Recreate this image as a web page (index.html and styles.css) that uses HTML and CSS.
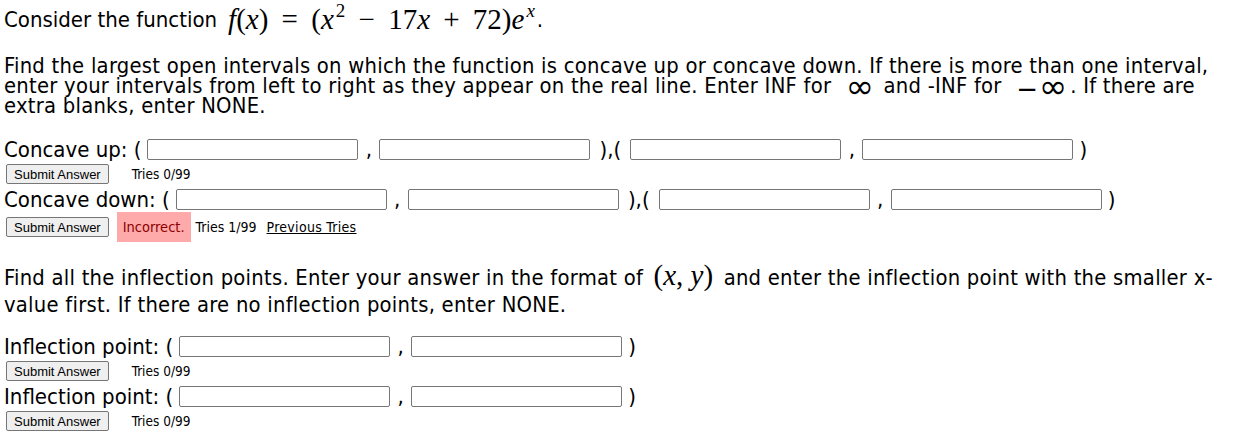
FILE: index.html
```html
<!DOCTYPE html>
<html lang="en">
<head>
    <meta charset="UTF-8">
    <title>Concavity problem</title>
    <link rel="stylesheet" href="styles.css">
</head>
<body>
    <div class="problem">
        <!-- statement -->
        <p class="intro">Consider the function <span class="math"><i>f</i>(<i>x</i>) <span class="op">=</span> (<i>x</i><sup>2</sup> <span class="op">&minus;</span> 17<i>x</i> <span class="op">+</span> 72)<i>e</i><sup><i>x</i></sup></span>.</p>

        <p class="text">Find the largest open intervals on which the function is concave up or concave down. If there is more than one interval,<br>enter your intervals from left to right as they appear on the real line. Enter INF for <span class="inf">&infin;</span> and -INF for <span class="inf"><span class="minus">&minus;</span>&infin;</span>. If there are<br>extra blanks, enter NONE.</p>

        <!-- concave up -->
        <div class="row">
            <span class="label">Concave up: (</span>
            <input type="text" class="answer">
            <span class="sep">,</span>
            <input type="text" class="answer">
            <span class="sep wide">),(</span>
            <input type="text" class="answer">
            <span class="sep">,</span>
            <input type="text" class="answer">
            <span class="sep end">)</span>
        </div>
        <div class="submit-row">
            <button>Submit Answer</button>
            <span class="tries">Tries 0/99</span>
        </div>

        <!-- concave down -->
        <div class="row">
            <span class="label">Concave down: (</span>
            <input type="text" class="answer">
            <span class="sep">,</span>
            <input type="text" class="answer">
            <span class="sep wide">),(</span>
            <input type="text" class="answer">
            <span class="sep">,</span>
            <input type="text" class="answer">
            <span class="sep end">)</span>
        </div>
        <div class="submit-row tall">
            <button>Submit Answer</button>
            <span class="incorrect">Incorrect.</span>
            <span class="tries near">Tries 1/99 <a href="#">Previous Tries</a></span>
        </div>

        <!-- inflection points -->
        <p class="text second">Find all the inflection points. Enter your answer in the format of <span class="math big">(<i>x</i>, <i>y</i>)</span> and enter the inflection point with the smaller x-<br>value first. If there are no inflection points, enter NONE.</p>

        <div class="row">
            <span class="label">Inflection point: (</span>
            <input type="text" class="answer">
            <span class="sep">,</span>
            <input type="text" class="answer">
            <span class="sep end">)</span>
        </div>
        <div class="submit-row">
            <button>Submit Answer</button>
            <span class="tries">Tries 0/99</span>
        </div>

        <div class="row">
            <span class="label">Inflection point: (</span>
            <input type="text" class="answer">
            <span class="sep">,</span>
            <input type="text" class="answer">
            <span class="sep end">)</span>
        </div>
        <div class="submit-row">
            <button>Submit Answer</button>
            <span class="tries">Tries 0/99</span>
        </div>
    </div>
</body>
</html>
```

FILE: styles.css
```css
* {
    box-sizing: border-box;
    margin: 0;
    padding: 0;
}

body {
    font-family: "DejaVu Sans Condensed", "DejaVu Sans", sans-serif;
    font-size: 22px;
    color: #000;
    background: #fff;
}

.problem {
    padding: 4px 4px;
}

/* 题目 */
.intro {
    height: 30px;
    display: flex;
    align-items: center;
    white-space: nowrap;
}

.math {
    font-family: "Liberation Serif", "Times New Roman", serif;
    font-size: 29px;
    letter-spacing: 0;
    margin: 0 2px 0 11px;
}

.math i {
    font-style: italic;
}

.math sup {
    font-size: 19px;
    vertical-align: 12px;
    line-height: 0;
    margin-left: 2px;
}

.math .op {
    margin: 0 6px;
}

.text {
    margin-top: 22px;
    font-size: 21.8px;
    letter-spacing: 0.25px;
    line-height: 20px;
    white-space: nowrap;
}

.text.second {
    margin-top: 19px;
    line-height: 27px;
}

.math.big {
    font-size: 29px;
    margin: 0 4px;
    line-height: 1;
}

.inf {
    display: inline-block;
    height: 20px;
    font-family: "DejaVu Sans", sans-serif;
    font-size: 34px;
    letter-spacing: 0;
    line-height: 20px;
    vertical-align: top;
    margin: 0 3px 0 8px;
}

.inf .minus {
    font-size: 26px;
    margin-right: 1px;
}

/* 输入行 */
.row {
    display: flex;
    align-items: center;
    height: 24px;
}

.text + .row {
    margin-top: 21px;
}

.text.second + .row {
    margin-top: 16px;
}

.label {
    margin-right: 6px;
}

.answer {
    width: 211px;
    height: 21px;
    border: 1px solid #767676;
    border-radius: 2px;
    background: #fff;
}

.sep {
    width: 21px;
    text-align: center;
}

.sep.wide {
    width: 40px;
}

.sep.end {
    width: auto;
    margin-left: 6px;
}

/* 提交行 */
.submit-row {
    display: flex;
    align-items: center;
    height: 26px;
}

.submit-row.tall {
    height: 30px;
    margin-top: 1px;
}

button {
    font-family: "Liberation Sans", Arial, sans-serif;
    font-size: 13px;
    padding: 0 7px;
    height: 20px;
    margin-left: 2px;
    background: #efefef;
    border: 1px solid #767676;
    border-radius: 2px;
    color: #000;
}

.tries {
    font-size: 13.5px;
    margin-left: 23px;
}

.tries.near {
    margin-left: 5px;
    font-size: 14px;
}

.tries a {
    color: #000;
    margin-left: 6px;
    letter-spacing: 0.3px;
}

.incorrect {
    background: #ffaaaa;
    color: #8b0000;
    font-size: 14.5px;
    line-height: 30px;
    padding: 0 6px;
    margin-left: 8px;
}
```
